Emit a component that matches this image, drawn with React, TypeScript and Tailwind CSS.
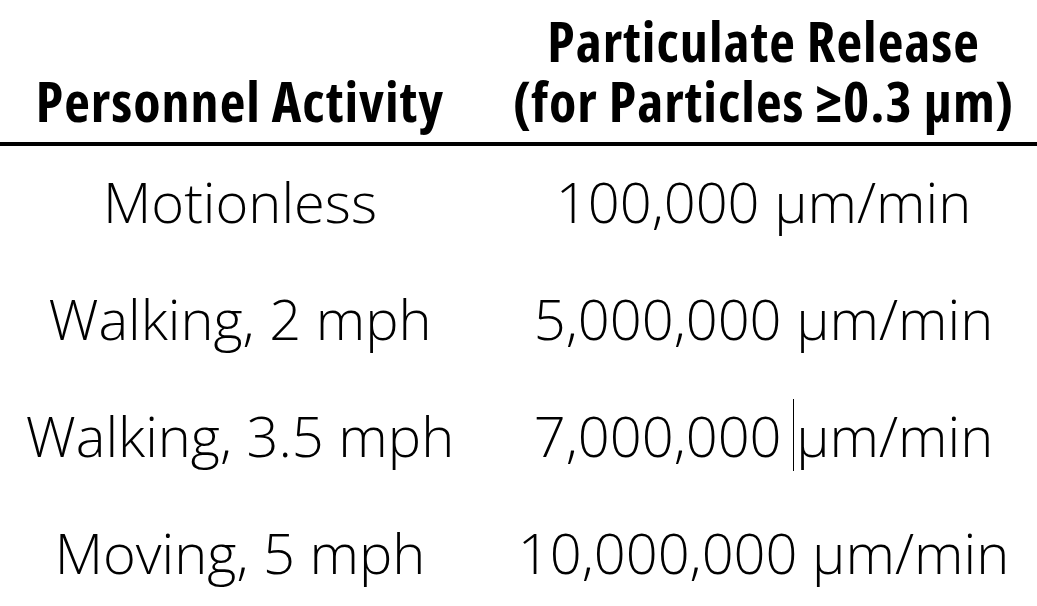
const rows = [
  { activity: "Motionless", release: "100,000", caret: false },
  { activity: "Walking, 2 mph", release: "5,000,000", caret: false },
  { activity: "Walking, 3.5 mph", release: "7,000,000", caret: true },
  { activity: "Moving, 5 mph", release: "10,000,000", caret: false },
];

export default function App() {
  return (
    <div
      className="w-[1037px] h-[606px] bg-white text-black overflow-hidden"
      style={{ fontFamily: '"Open Sans", "Liberation Sans", sans-serif' }}
    >
      {/* Header */}
      <div className="grid grid-cols-[480px_1fr] items-end pt-[10px] pb-[12px] text-[56px] leading-[60px] font-bold font-stretch-condensed tracking-[1px] text-center">
        <div>Personnel Activity</div>
        <div className="pl-[10px]">
          Particulate Release
          <br />
          (for Particles ≥0.3 µm)
        </div>
      </div>
      <div className="h-[4px] bg-black" />

      {/* Rows */}
      <div className="-mt-[3px]">
        {rows.map((row) => (
          <div
            key={row.activity}
            className="grid grid-cols-[480px_1fr] text-[56px] leading-[117px] font-light text-center"
          >
            <div>{row.activity}</div>
            <div className="pl-[10px] whitespace-nowrap">
              {row.release}{" "}
              {row.caret ? (
                <span className="relative">
                  <span className="absolute -left-[3px] top-[2px] h-[72px] w-[1px] bg-black" />
                  µm/min
                </span>
              ) : (
                "µm/min"
              )}
            </div>
          </div>
        ))}
      </div>
    </div>
  );
}
